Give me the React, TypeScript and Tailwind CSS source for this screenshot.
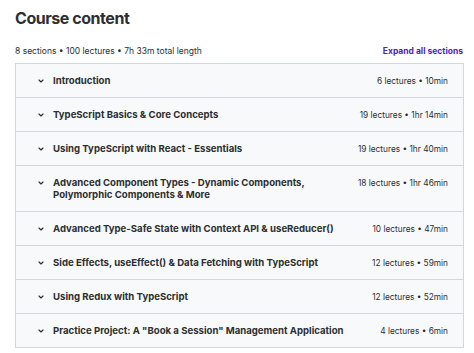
const sections = [
  { title: "Introduction", meta: "6 lectures • 10min" },
  { title: "TypeScript Basics & Core Concepts", meta: "19 lectures • 1hr 14min" },
  { title: "Using TypeScript with React - Essentials", meta: "19 lectures • 1hr 40min" },
  {
    title: "Advanced Component Types - Dynamic Components, Polymorphic Components & More",
    meta: "18 lectures • 1hr 46min",
  },
  { title: "Advanced Type-Safe State with Context API & useReducer()", meta: "10 lectures • 47min" },
  { title: "Side Effects, useEffect() & Data Fetching with TypeScript", meta: "12 lectures • 59min" },
  { title: "Using Redux with TypeScript", meta: "12 lectures • 52min" },
  { title: 'Practice Project: A "Book a Session" Management Application', meta: "4 lectures • 6min" },
];

function Chevron() {
  return (
    <svg width="8" height="8" viewBox="0 0 24 24" fill="none" className="shrink-0 mt-[2px]">
      <path d="M6 9l6 6 6-6" stroke="#2d2f31" strokeWidth="3.5" strokeLinecap="round" strokeLinejoin="round" />
    </svg>
  );
}

export default function App() {
  return (
    <div className="w-[474px] h-[353px] bg-white text-[#2d2f31] font-['Inter','Liberation_Sans',sans-serif] overflow-hidden">
      <div className="pl-[15px] pr-[11px] pt-[6px]">
        <h2 className="text-[16px] font-bold leading-[24px] tracking-[-0.45px]">Course content</h2>
        <div className="mt-[14px] flex items-center justify-between h-[14px]">
          <span className="text-[8.5px] text-[#2d2f31]">8 sections • 100 lectures • 7h 33m total length</span>
          <button className="text-[8.5px] font-bold text-[#5022c3]">Expand all sections</button>
        </div>
        <div className="mt-[5px] border border-[#d1d7dc] w-[449px]">
          {sections.map((s, i) => (
            <div
              key={s.title}
              className={
                "bg-[#f7f9fa] flex items-start justify-between pl-[21px] pr-[15px] pt-[11px] pb-[10px] " +
                (i > 0 ? "border-t border-[#d1d7dc]" : "")
              }
            >
              <div className="flex items-start gap-[8px]">
                <Chevron />
                <span className="text-[9.6px] font-bold leading-[12px] max-w-[300px]">{s.title}</span>
              </div>
              <span className="text-[8.3px] leading-[12px] text-[#2d2f31] whitespace-nowrap">{s.meta}</span>
            </div>
          ))}
        </div>
      </div>
    </div>
  );
}
